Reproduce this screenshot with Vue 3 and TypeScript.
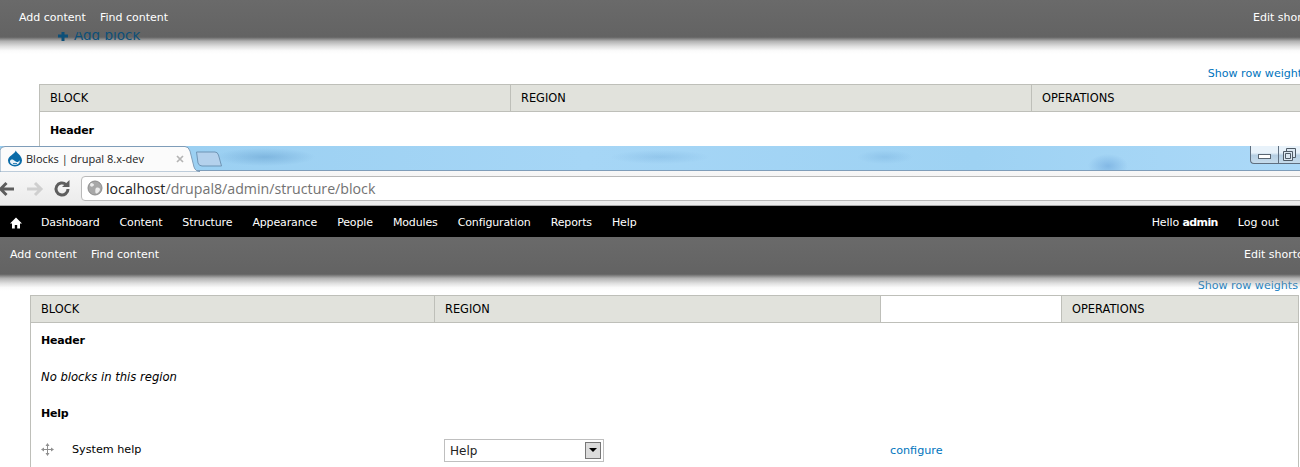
<script setup lang="ts">
const navItems: string[] = ['Dashboard', 'Content', 'Structure', 'Appearance', 'People', 'Modules', 'Configuration', 'Reports', 'Help']
</script>

<template>
  <div class="page">
    <section class="shot top">
      <div class="bar">
        <div class="links"><a>Add content</a><a>Find content</a></div>
        <a class="edit">Edit shortcuts</a>
      </div>
      <div class="add-block">
        <svg width="10" height="10" viewBox="0 0 10 10"><path d="M3.500 0h3v3.500H10v3H6.500V10h-3V6.500H0v-3h3.500z" fill="#0d4f78"/></svg>
        <span>Add block</span>
      </div>
      <div class="weights top-weights"><a>Show row weights</a></div>
      <div class="table top-table">
        <div class="thead">
          <div class="th c1">BLOCK</div>
          <div class="th c2">REGION</div>
          <div class="th c3">OPERATIONS</div>
        </div>
        <div class="region">Header</div>
      </div>
    </section>

    <header class="chrome">
      <div class="tabstrip">
        <div class="tab">
          <svg class="tab-shape" width="200" height="26" viewBox="0 0 200 26">
            <path d="M0 26V4Q1 .5 5 .5H185Q188.500 .5 190 5L194 21Q195.500 25.500 200 25.500V26z" fill="#fbfbfb" stroke="#7f9db9"/>
          </svg>
          <svg class="favicon" width="16" height="17" viewBox="0 0 16 17">
            <path d="M8.800.5C9.500 3 15 5.500 15 10.500A7 6 0 0 1 1 10.500C1 6 7.800 4 8.800.5z" fill="#0a6ba8"/>
            <path d="M3 11c1.200-2.300 3.200-1.800 5 0s3.500 1 4.700-.8c.5 2.300-1.400 4.600-4.700 4.800-3.200 0-5.200-1.800-5-4z" fill="#e9f2f8"/>
            <path d="M6 13.200h4v1H6z" fill="#0a6ba8"/>
          </svg>
          <span class="tab-title">Blocks | drupal 8.x-dev</span>
          <svg class="tab-close" width="8" height="8" viewBox="0 0 8 8"><path d="M1 1l6 6M7 1L1 7" stroke="#b4b4b4" stroke-width="1.700"/></svg>
        </div>
        <svg class="newtab" width="30" height="17" viewBox="0 0 30 17">
          <path d="M1.500 1H20Q22.500 1 23.500 4L26.500 15H7Q4 15 3 12z" fill="#b4d1ec" stroke="#6f95b5"/>
        </svg>
        <div class="winbtns">
          <div class="winbtn first"><span class="min"></span></div>
          <div class="winbtn">
            <svg width="13" height="14" viewBox="0 0 13 14">
              <path d="M3.500 3V.5h9v9H10" fill="#dce8f2" stroke="#4f5b66"/>
              <path d="M.500 3.500h9v9h-9z" fill="#dce8f2" stroke="#4f5b66"/>
              <path d="M2.500 5.500h5v5h-5z" fill="none" stroke="#4f5b66"/>
            </svg>
          </div>
        </div>
      </div>
      <div class="toolbar">
        <svg class="tool-icons" width="72" height="18" viewBox="0 0 72 18">
          <path d="M0 9h14M6.500 3L.500 9l6 6" fill="none" stroke="#5d5d5d" stroke-width="3"/>
          <path d="M27 9h14M35 3l6 6-6 6" fill="none" stroke="#cfcfcf" stroke-width="3"/>
          <path d="M68 9a6 6 0 1 1-2-4.500" fill="none" stroke="#5d5d5d" stroke-width="3"/>
          <path d="M62 7h7.500V0z" fill="#5d5d5d"/>
        </svg>
        <div class="omnibox">
          <svg width="16" height="16" viewBox="0 0 16 16">
            <circle cx="8" cy="8" r="7" fill="#a8a8a8" stroke="#8c8c8c"/>
            <path d="M4 3c2 0 3 1 3 2S5 7 4 6.500 2.500 4.500 4 3zM9 8c2-1 4 0 4 1.500S11 13 9.500 13.500 8 9 9 8z" fill="#ececec"/>
          </svg>
          <span class="host">localhost</span><span class="path">/drupal8/admin/structure/block</span>
        </div>
      </div>
      <div class="toolbar-edge"></div>
    </header>

    <nav class="black">
      <div class="nav-left">
        <svg class="home" width="12" height="12" viewBox="0 0 12 12"><path d="M6 .5L12 6.500h-2V11.500H7.200V8H4.800v3.500H2V6.500H0z" fill="#fff"/></svg>
        <a v-for="item in navItems" :key="item">{{ item }}</a>
      </div>
      <div class="nav-right"><span class="hello">Hello <b>admin</b></span><a>Log out</a></div>
    </nav>

    <div class="bar second">
      <div class="links"><a>Add content</a><a>Find content</a></div>
      <a class="edit">Edit shortcuts</a>
    </div>

    <main class="content">
      <div class="weights"><a>Show row weights</a></div>
      <div class="table bottom-table">
        <div class="thead">
          <div class="th d1">BLOCK</div>
          <div class="th d2">REGION</div>
          <div class="blank"></div>
          <div class="th d3">OPERATIONS</div>
        </div>
        <div class="region">Header</div>
        <div class="empty">No blocks in this region</div>
        <div class="region">Help</div>
        <div class="row">
          <svg class="drag" width="13" height="13" viewBox="0 0 13 13">
            <path d="M6.500 0L8.500 3h-1.500v3h3V4.500L13 6.500l-3 2V7H7v3h1.500l-2 3-2-3H6V7H3v1.500l-3-2 3-2V6h3V3H4.500z" fill="#8f8f8f"/>
          </svg>
          <span class="row-name">System help</span>
          <div class="select">
            <span class="select-label">Help</span>
            <span class="select-btn"><i></i></span>
          </div>
          <a class="configure">configure</a>
        </div>
      </div>
    </main>
  </div>
</template>

<style>
html, body { margin: 0; background: #fff; overflow: hidden; }
</style>

<style scoped>
.page {
  width: 1300px;
  height: 467px;
  overflow: hidden;
  font-family: "DejaVu Sans", sans-serif;
  font-size: 11.2px;
  color: #000;
  background: #fff;
  display: flex;
  flex-direction: column;
}
.shot { height: 146px; overflow: hidden; flex: none; }
.bar {
  position: relative;
  z-index: 2;
  width: 1309px;
  box-sizing: border-box;
  height: 37px;
  background: linear-gradient(#6a6a6a, #636363);
  color: #fff;
  font-size: 11px;
  display: flex;
  align-items: center;
  justify-content: space-between;
  flex: none;
  padding: 0 0 3px 19px;
}
.bar::after {
  content: "";
  position: absolute;
  left: 0;
  right: 0;
  top: 100%;
  height: 17px;
  background: linear-gradient(rgba(80, 80, 80, .9), rgba(130, 130, 130, .62) 25%, rgba(170, 170, 170, .38) 55%, rgba(220, 220, 220, .13) 80%, rgba(255, 255, 255, 0));
}
.links { display: flex; gap: 14px; }
.edit { width: 56px; white-space: nowrap; }
.add-block {
  position: relative;
  z-index: 3;
  margin: -5px 0 0 58px;
  height: 9px;
  overflow: hidden;
  display: flex;
  align-items: flex-end;
  gap: 6px;
  font-size: 13.5px;
  line-height: 11px;
  color: #0d4f78;
}
.weights {
  color: #0074bd;
  font-size: 11.1px;
  text-align: right;
  white-space: nowrap;
  height: 18px;
  line-height: 18px;
}
.top-weights { margin-top: 24px; width: 1308px; }
.table {
  border-left: 1px solid #bebfb9;
  border-right: 1px solid #bebfb9;
}
.top-table { margin: 1px 0 0 39px; width: 1290px; }
.top-table .region { line-height: 38px; }
.thead {
  display: flex;
  height: 26px;
  border-top: 1px solid #bebfb9;
  border-bottom: 1px solid #bebfb9;
  background: #e1e2dc;
  font-size: 11.4px;
}
.th {
  box-sizing: border-box;
  padding-left: 10px;
  line-height: 26px;
  border-right: 1px solid #bebfb9;
  flex: none;
}
.c1 { width: 471px; }
.c2 { width: 521px; }
.c3 { flex: 1; border-right: 0; }
.region {
  font-weight: 700;
  font-size: 11px;
  letter-spacing: -.2px;
  height: 36px;
  line-height: 36px;
  padding-left: 10px;
}
.empty + .region { line-height: 38px; }
.chrome { flex: none; }
.tabstrip {
  height: 25px;
  box-sizing: border-box;
  border-bottom: 1px solid #7f9db9;
  display: flex;
  background:
    radial-gradient(ellipse 50px 9px at 265px 11px, rgba(90, 150, 200, .45), transparent),
    radial-gradient(ellipse 50px 7px at 660px 11px, rgba(100, 160, 210, .28), transparent),
    radial-gradient(ellipse 28px 7px at 885px 11px, rgba(100, 160, 210, .28), transparent),
    radial-gradient(ellipse 20px 12px at 1108px 20px, rgba(90, 150, 210, .45), transparent),
    linear-gradient(90deg, #96cdf0, #a6d6f6 45%, #9ed2f3 75%, #acd9f8);
}
.tab {
  position: relative;
  z-index: 1;
  flex: none;
  width: 195px;
  height: 25px;
  box-sizing: border-box;
  display: flex;
  align-items: center;
  padding: 0 0 0 7px;
  font: 11px "Open Sans", sans-serif;
  color: #222;
}
.tab-shape { position: absolute; left: 0; top: 0; z-index: -1; }
.tab-title { margin-left: 3px; }
.tab-close { margin-left: auto; margin-right: 11px; }
.newtab { margin: 5px 0 0 0; flex: none; }
.winbtns {
  margin-left: auto;
  display: flex;
  height: 18px;
  width: 50px;
  background: linear-gradient(#e8f2fa 40%, #b6cfe3 55%, #c6dcec);
  border-left: 1px solid #5f6f80;
  border-bottom: 1px solid #5f6f80;
  border-bottom-left-radius: 4px;
  box-sizing: border-box;
}
.winbtn {
  flex: 1;
  display: flex;
  align-items: center;
  justify-content: center;
}
.winbtn.first { flex: none; width: 28px; border-right: 1px solid #5f6f80; box-sizing: border-box; }
.min { width: 11px; height: 3px; border: 1px solid #5a6672; background: #fff; display: block; margin-top: 3px; }
.toolbar {
  height: 34px;
  box-sizing: border-box;
  background: linear-gradient(#f7f7f7, #ebebeb);
  display: flex;
  align-items: center;
  position: relative;
}
.tool-icons { position: absolute; left: 0; top: 9px; }
.omnibox {
  margin-left: 81px;
  width: 1240px;
  flex: none;
  height: 25px;
  box-sizing: border-box;
  border: 1px solid #b9b9b9;
  border-radius: 4px;
  background: #fff;
  display: flex;
  align-items: center;
  padding-left: 5px;
  font: 14.2px "Open Sans", sans-serif;
}
.omnibox svg { margin-right: 3px; }
.host { color: #222; }
.path { color: #727272; }
.toolbar-edge { height: 1px; background: #a9a9a9; }
.black {
  height: 31px;
  box-sizing: border-box;
  padding: 2px 21px 0 10px;
  background: #000;
  color: #fff;
  font-size: 11px;
  display: flex;
  align-items: center;
  justify-content: space-between;
  flex: none;
}
.nav-left { display: flex; align-items: center; }
.home { margin-right: 19px; }
.nav-left a { margin-right: 20px; letter-spacing: -.13px; }
.nav-right { display: flex; gap: 20px; }
.hello { letter-spacing: -.1px; }
.hello b { letter-spacing: -.6px; }
.second { padding-left: 10px; }
.second .edit { width: 65px; }
.content { flex: 1; min-height: 0; }
.content .weights { width: 1298px; margin-top: 3px; height: 18px; }
.bottom-table { margin-left: 30px; width: 1267px; }
.d1 { width: 404px; }
.d2 { width: 446px; }
.blank { width: 181px; background: #fff; border-right: 1px solid #bebfb9; flex: none; box-sizing: border-box; }
.d3 { flex: 1; border-right: 0; }
.empty {
  font-style: italic;
  font-size: 11.6px;
  box-sizing: border-box;
  height: 36px;
  padding: 1px 0 0 10px;
  line-height: 35px;
}
.row {
  display: flex;
  align-items: center;
  height: 36px;
}
.drag { margin-left: 10px; }
.row-name { width: 372px; margin-left: 18px; }
.select {
  box-sizing: border-box;
  width: 160px;
  height: 23px;
  margin-top: 2px;
  border: 1px solid #bfbfbf;
  display: flex;
  align-items: center;
  justify-content: space-between;
  padding: 0 2px 0 5px;
  font-size: 12px;
  color: #222;
}
.select-label { padding-top: 2px; }
.select-btn {
  width: 16px;
  height: 17px;
  box-sizing: border-box;
  border: 1px solid #777;
  background: #dcdcdc;
  display: flex;
  align-items: center;
  justify-content: center;
}
.select-btn i {
  width: 0;
  height: 0;
  border: 4px solid transparent;
  border-top: 4px solid #000;
  border-bottom: 0;
}
.configure { margin-left: 286px; margin-top: 2px; color: #0074bd; }
</style>
